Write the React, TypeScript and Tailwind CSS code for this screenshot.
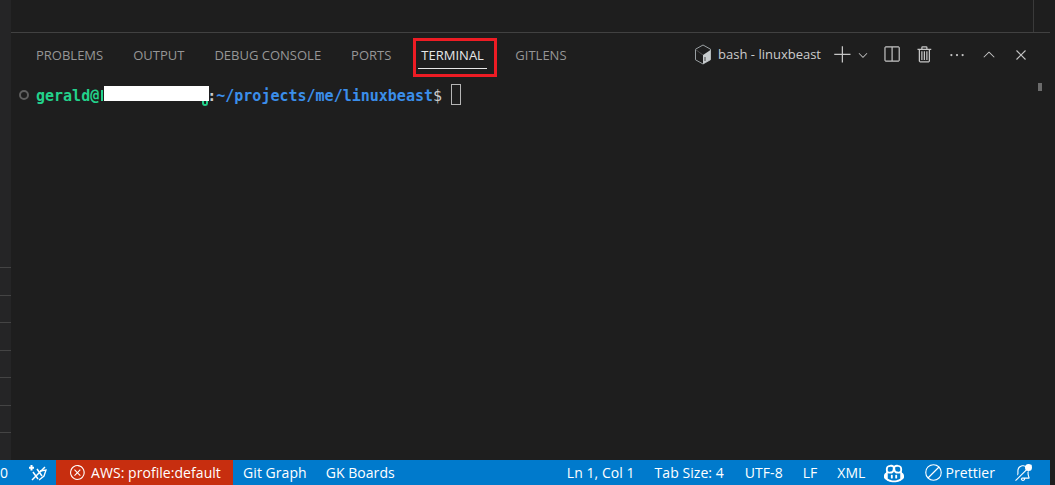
import React from "react";
import { VscAdd, VscChevronDown, VscChevronUp, VscClose, VscEllipsis, VscSplitHorizontal, VscTrash, VscError, VscCircleSlash, VscCopilot, VscBellSlash } from "react-icons/vsc";

const tabs = ["PROBLEMS", "OUTPUT", "DEBUG CONSOLE", "PORTS", "TERMINAL", "GITLENS"];

function BashIcon() {
  return (
    <svg width="18" height="21" viewBox="0 0 18 21" fill="none">
      <path d="M9 1 L16.5 5.2 V15.8 L9 20 L1.5 15.8 V5.2 Z" stroke="#9aa0a3" strokeWidth="1" />
      <path d="M9 11 L16.5 6 V15.8 L9 20 Z" fill="#c8ccce" />
      <path d="M9 11 L1.5 5.5" stroke="#666" strokeWidth="0.7" />
      <path d="M11 13 V17" stroke="#444" strokeWidth="1" />
    </svg>
  );
}

function SparkleSlash() {
  return (
    <svg width="20" height="18" viewBox="0 0 20 18" fill="none">
      <path d="M3.5 1 V6.5 M1 3.7 H6" stroke="#fff" strokeWidth="2" />
      <path d="M5 8 L10 15 M9 5 L14 12 M4 16 L17 3" stroke="#fff" strokeWidth="1.5" />
      <path d="M12 7 L18 6 L16 12 L11 16" stroke="#fff" strokeWidth="1.3" />
    </svg>
  );
}

export default function App() {
  return (
    <div className="flex h-[485px] w-[1055px] overflow-hidden bg-[#1e1e1e] font-['Open_Sans',sans-serif]">
      <div className="flex w-[1050px] flex-col">
        <div className="flex h-[460px]">
          <div className="flex w-[11px] flex-col bg-[#252526] pt-[267px]">
            {[0, 1, 2, 3, 4, 5, 6].map((i) => (
              <div key={i} className="mb-[26.5px] h-px bg-[#444444]" />
            ))}
          </div>
          <div className="relative flex min-w-0 flex-1 flex-col">
            <div className="h-[33px] shrink-0 border-b border-[#414141] pr-4">
              <div className="h-full w-[1023px] border-r border-[#3a3a3a]" />
            </div>
            <div className="flex h-[44px] shrink-0 items-center pb-[1px] pl-[25px] pr-[20px]">
              <div className="flex items-center gap-[30px]">
                {tabs.map((t) => (
                  <div
                    key={t}
                    className={
                      t === "TERMINAL"
                        ? "relative w-[64px] whitespace-nowrap text-[13px] leading-[18px] text-[#e7e7e7]"
                        : "text-[13px] leading-[18px] text-[#969696]"
                    }
                  >
                    {t}
                    {t === "TERMINAL" && (
                      <>
                        <div className="absolute bottom-[-5px] left-[-3px] right-[-2px] h-px bg-[#e7e7e7]" />
                        <div className="absolute bottom-[-13px] left-[-8px] right-[-12px] top-[-8px] border-[3px] border-[#ed1c24]" />
                      </>
                    )}
                  </div>
                ))}
              </div>
              <div className="ml-auto flex items-center text-[#c5c5c5]">
                <BashIcon />
                <span className="ml-[6px] text-[13px] text-[#cccccc]">bash - linuxbeast</span>
                <VscAdd className="ml-[12px]" size={20} />
                <VscChevronDown className="ml-[3px]" size={14} />
                <VscSplitHorizontal className="ml-[12px]" size={19} />
                <VscTrash className="ml-[14px]" size={20} />
                <VscEllipsis className="ml-[13px]" size={18} />
                <VscChevronUp className="ml-[14px]" size={18} />
                <VscClose className="ml-[14px]" size={18} />
              </div>
            </div>
            <div className="relative flex flex-1 items-start pl-[8px] pt-[6px] font-['DejaVu_Sans_Mono',monospace] text-[15px] font-bold leading-[26px]">
              <div className="mt-[7px] h-[10px] w-[10px] rounded-full border-2 border-[#5f5f5f]" />
              <span className="ml-[7px] text-[#23d18b]">gerald@</span>
              <span className="relative ml-[5px] mt-[3px] h-[15px] w-[105px] bg-white">
                <span className="absolute left-[-3px] top-[4px] h-[11px] w-[2px] bg-[#23d18b]" />
                <span className="absolute bottom-[-5px] right-[1px] h-[5px] w-[6px] rounded-b-[3px] border-b-2 border-l-2 border-r-2 border-[#23d18b]" />
              </span>
              <span className="ml-[-2px] text-[#3b8eea]"><span className="text-[#cccccc]">:</span>~/projects/me/linuxbeast</span>
              <span className="font-normal text-[#cccccc]">$</span>
              <span className="ml-[9px] mt-[1px] h-[21px] w-[10px] border border-[#b5b5b5]" />
              <div className="absolute right-[8px] top-[6px] h-[8px] w-[4px] bg-[#6b6b6b]" />
            </div>
          </div>
        </div>
        <div className="flex h-[25px] items-center overflow-hidden bg-[#007acc] text-[14px] tracking-[0.05px] text-white">
          <span className="shrink-0">0</span>
          <span className="ml-[20px] flex shrink-0"><SparkleSlash /></span>
          <div className="ml-[8px] flex h-full w-[177px] shrink-0 items-center bg-[#c72e0f] pl-[13px]">
            <VscError size={17} />
            <span className="ml-[5px]">AWS: profile:default</span>
          </div>
          <span className="ml-[10px]">Git Graph</span>
          <span className="ml-[19px]">GK Boards</span>
          <div className="ml-auto flex items-center pr-[18px]">
            <span>Ln 1, Col 1</span>
            <span className="ml-[20px]">Tab Size: 4</span>
            <span className="ml-[21px]">UTF-8</span>
            <span className="ml-[20px]">LF</span>
            <span className="ml-[20px]">XML</span>
            <VscCopilot className="ml-[19px]" size={20} />
            <VscCircleSlash className="ml-[20px]" size={19} />
            <span className="ml-[2px]">Prettier</span>
            <span className="relative ml-[19px] flex">
              <VscBellSlash size={18} />
              <span className="absolute right-0 top-0 h-[7px] w-[7px] rounded-full bg-white" />
            </span>
          </div>
        </div>
      </div>
      <div className="w-[5px] bg-[#1e1e1e]" />
    </div>
  );
}
